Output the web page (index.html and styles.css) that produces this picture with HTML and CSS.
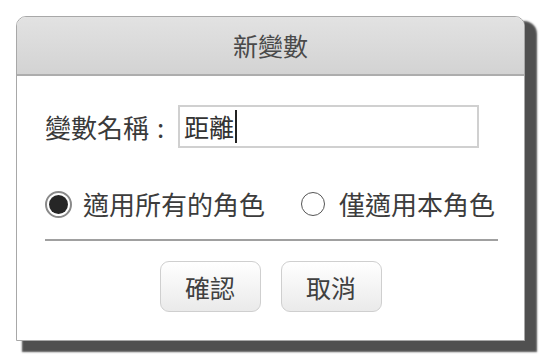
FILE: index.html
```html
<!DOCTYPE html>
<html lang="zh-Hant">
<head>
<meta charset="utf-8">
<title>新變數</title>
<link rel="stylesheet" href="styles.css">
</head>
<body>
<div class="page">
  <div class="dialog">
    <div class="dialog-header">新變數</div>
    <div class="dialog-body">
      <div class="name-row">
        <span class="name-label">變數名稱<span class="colon">:</span></span>
        <div class="text-field"><span class="field-text">距離</span><span class="caret"></span></div>
      </div>
      <div class="scope-row">
        <label class="radio-option">
          <span class="radio radio-checked"><span class="radio-dot"></span></span>
          <span class="radio-text">適用所有的角色</span>
        </label>
        <label class="radio-option">
          <span class="radio"></span>
          <span class="radio-text">僅適用本角色</span>
        </label>
      </div>
      <div class="separator"></div>
      <div class="button-row">
        <button class="btn">確認</button>
        <button class="btn">取消</button>
      </div>
    </div>
  </div>
</div>
</body>
</html>
```

FILE: styles.css
```css
html, body {
  margin: 0;
  padding: 0;
  background: #ffffff;
}

body {
  font-family: "Noto Sans CJK TC", "Noto Sans", sans-serif;
  color: #3c3c3c;
}

.page {
  min-height: 356px;
  padding: 16px 0 0 16px;
  box-sizing: border-box;
}

.dialog {
  width: 507px;
  height: 323px;
  border: 1px solid #a8a8a8;
  border-radius: 10px 10px 0 0;
  background: #ffffff;
  box-shadow: 9px 8px 2px 3px #505050;
  display: flex;
  flex-direction: column;
}

.dialog-header {
  height: 59px;
  border-bottom: 2px solid #adadad;
  border-radius: 9px 9px 0 0;
  background: linear-gradient(#e2e2e2, #d3d3d3);
  display: flex;
  align-items: center;
  justify-content: center;
  font-size: 25px;
  color: #4a4a4a;
  padding-bottom: 2px;
  box-sizing: border-box;
}

.dialog-body {
  flex: 1;
  padding: 29px 26px 0 28px;
  display: flex;
  flex-direction: column;
}

.name-row {
  display: flex;
  align-items: center;
  height: 43px;
}

.name-label {
  font-size: 26px;
  line-height: 1;
  width: 133px;
  white-space: nowrap;
  color: #3a3a3a;
}

.colon {
  margin-left: 8px;
}

.text-field {
  width: 301px;
  height: 43px;
  box-sizing: border-box;
  border: 2px solid #d0d0d0;
  display: flex;
  align-items: center;
  padding-left: 4px;
  font-size: 25px;
  color: #333333;
}

.field-text {
  line-height: 1;
}

.caret {
  width: 2px;
  height: 33px;
  background: #222222;
  margin-left: 1px;
}

.scope-row {
  display: flex;
  align-items: center;
  margin-top: 41px;
  height: 30px;
}

.radio-option {
  display: flex;
  align-items: center;
}

.radio-option + .radio-option {
  margin-left: 36px;
}

.radio {
  width: 24px;
  height: 24px;
  box-sizing: border-box;
  border: 1.5px solid #555555;
  border-radius: 50%;
  background: #ffffff;
  display: flex;
  align-items: center;
  justify-content: center;
}

.radio-checked {
  width: 27px;
  height: 27px;
  border: 2px solid #8a8a8a;
}

.radio-dot {
  width: 19px;
  height: 19px;
  border-radius: 50%;
  background: #262626;
}

.radio-text {
  font-size: 26px;
  line-height: 1;
  margin-left: 11px;
  color: #3c3c3c;
}

.radio-option + .radio-option .radio-text {
  margin-left: 14px;
}

.separator {
  margin-top: 20px;
  height: 2px;
  width: 453px;
  background: #a0a0a0;
}

.button-row {
  margin-top: 20px;
  display: flex;
  justify-content: center;
  gap: 20px;
  margin-left: -28px;
  margin-right: -26px;
}

.btn {
  width: 101px;
  height: 51px;
  border: 1px solid #cfcfcf;
  border-radius: 9px;
  background: linear-gradient(#ffffff, #eaeaea);
  font-family: "Noto Sans CJK TC", "Noto Sans", sans-serif;
  font-size: 25px;
  color: #404040;
  padding: 0;
  display: flex;
  align-items: center;
  justify-content: center;
}
```
